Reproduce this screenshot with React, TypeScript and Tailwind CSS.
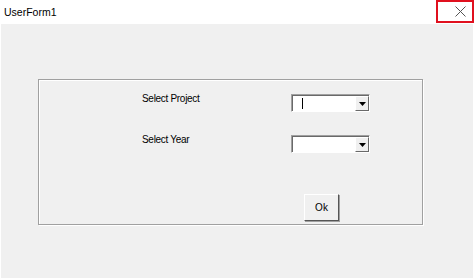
import { useState } from "react";

function Combo({ caret }: { caret?: boolean }) {
  return (
    <div className="w-[79px] h-[18px] flex border-t border-l border-[#a0a0a0] border-r border-b border-r-white border-b-white bg-white">
      <div className="flex-1 flex border-t border-l border-[#696969] border-r-0 border-b-0 bg-white">
        <div className="flex-1 flex items-center pl-[9px]">
          {caret && <div className="w-[1px] h-[11px] bg-black" />}
        </div>
        <div className="w-[14px] h-full flex items-center justify-center bg-[#f0f0f0] border-t border-l border-white border-r border-b border-r-[#696969] border-b-[#696969]">
          <svg width="7" height="4" viewBox="0 0 7 4">
            <path d="M0 0H7L3.5 4Z" fill="#000" />
          </svg>
        </div>
      </div>
    </div>
  );
}

export default function App() {
  const [project] = useState("");

  return (
    <div
      className="w-[474px] h-[280px] bg-white flex flex-col"
      style={{ fontFamily: '"Liberation Sans", Arial, sans-serif' }}
    >
      {/* title bar */}
      <div className="h-[24px] flex items-start">
        <div className="pl-[4px] pt-[5px] text-[10.5px] leading-[14px] text-black">UserForm1</div>
        <div className="ml-auto w-[38px] h-[23px] border-2 border-[#e0101e] flex items-center justify-end pr-[6px]">
          <svg width="11" height="11" viewBox="0 0 11 11">
            <path d="M0.5 0.5L10.5 10.5M10.5 0.5L0.5 10.5" stroke="#555" strokeWidth="1" />
          </svg>
        </div>
      </div>

      {/* body */}
      <div className="flex-1 bg-[#f0f0f0] mx-[1px] mb-[2px] pt-[55px] pl-[37px]">
        <div className="w-[385px] h-[146px] border border-[#a0a0a0] shadow-[1px_1px_0_#fff,inset_1px_1px_0_#fff] pt-[14px] pl-[103px]">
          <div className="flex items-start h-[18px]">
            <div className="w-[149px] -mt-[2px] leading-[14px] text-[10px] tracking-[-0.3px] text-black">Select Project</div>
            <Combo caret={project === ""} />
          </div>
          <div className="flex items-start h-[18px] mt-[23px]">
            <div className="w-[149px] -mt-[2px] leading-[14px] text-[10px] tracking-[-0.3px] text-black">Select Year</div>
            <Combo />
          </div>
          <div className="pl-[162px] mt-[41px]">
            <button className="w-[35px] h-[27px] bg-[#f0f0f0] border-t border-l border-white border-r border-b border-r-[#555] border-b-[#555] shadow-[1px_1px_0_#a0a0a0] text-[10px] text-black flex items-center justify-center">
              Ok
            </button>
          </div>
        </div>
      </div>
    </div>
  );
}
